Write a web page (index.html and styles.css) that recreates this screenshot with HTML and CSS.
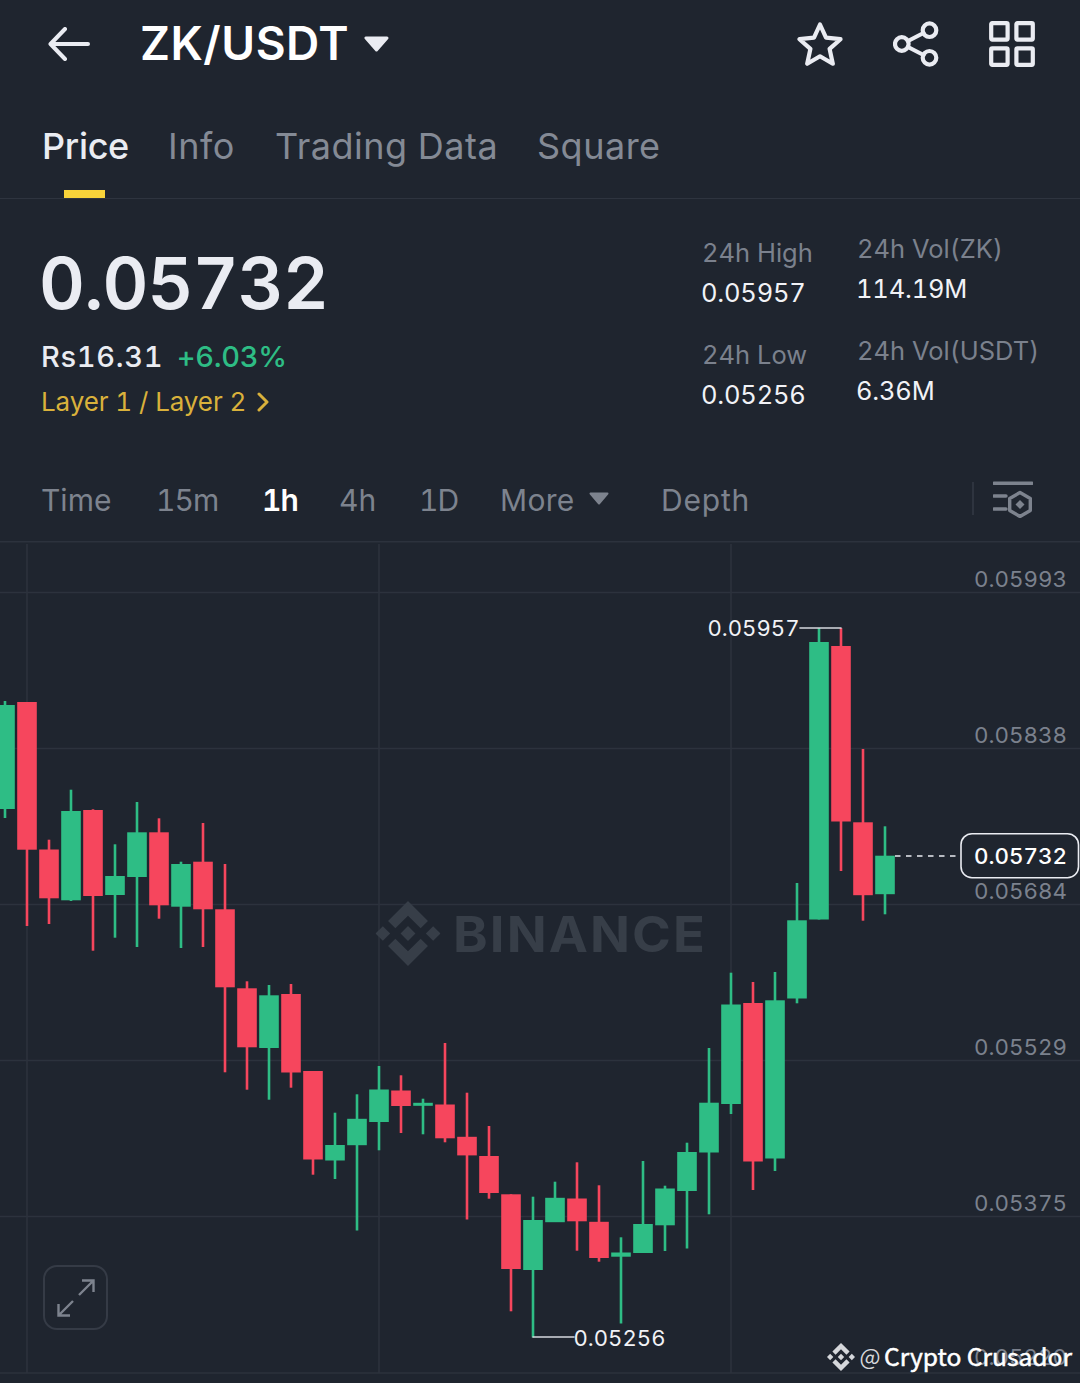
FILE: index.html
```html
<!DOCTYPE html>
<html lang="en">
<head>
<meta charset="UTF-8">
<meta name="viewport" content="width=device-width, initial-scale=1.0">
<title>ZK/USDT</title>
<link rel="stylesheet" href="styles.css">
</head>
<body>
<svg class="symbols" width="0" height="0">
    <symbol id="binance" viewBox="0 0 126.6 126.6">
        <path d="M38.7 53.2l24.6-24.6 24.6 24.6 14.3-14.3L63.3 0 24.4 38.9z"/>
        <path d="M0 63.3L14.3 49l14.3 14.3-14.3 14.3z"/>
        <path d="M38.7 73.4L63.3 98l24.6-24.6 14.3 14.3-38.9 38.9-38.9-38.9z"/>
        <path d="M98 63.3L112.3 49l14.3 14.3-14.3 14.3z"/>
        <path d="M77.8 63.3L63.3 48.8 48.8 63.3l14.5 14.5z"/>
    </symbol>
</svg>

<header class="header">
    <svg class="back" viewBox="0 0 42 34">
        <path d="M17 2L2.5 17 17 32M3 17h37"/>
    </svg>
    <h1 class="pair">ZK/USDT</h1>
    <svg class="pair_caret" viewBox="0 0 25 16">
        <path d="M2 2h21l-10.5 12z"/>
    </svg>
    <div class="header_icons">
        <svg viewBox="0 0 46 46">
            <path d="M23 3.5l6 13.2 14.5 1.5-10.9 9.7 3.2 14.8L23 35.3l-12.8 7.400 3.200-14.800L2.500 18.200 17 16.700z"/>
        </svg>
        <svg viewBox="0 0 46 46">
            <circle cx="8.800" cy="23" r="6.800"/>
            <circle cx="36.500" cy="9.200" r="6.800"/>
            <circle cx="36.500" cy="36.800" r="6.800"/>
            <path d="M15 20l15.500-8M15 26l15.500 8"/>
        </svg>
        <svg viewBox="0 0 46 46">
            <rect x="2.200" y="2.200" width="16.400" height="16.400" rx="1"/>
            <rect x="27.400" y="2.200" width="16.400" height="16.400" rx="1"/>
            <rect x="2.200" y="27.400" width="16.400" height="16.400" rx="1"/>
            <rect x="27.400" y="27.400" width="16.400" height="16.400" rx="1"/>
        </svg>
    </div>
</header>

<nav class="tabs">
    <span class="tab active">Price</span>
    <span class="tab">Info</span>
    <span class="tab">Trading Data</span>
    <span class="tab">Square</span>
</nav>

<section class="summary">
    <div class="quote">
        <div class="price">0.05732</div>
        <div class="fiat">Rs16.31 <span class="change">+6.03%</span></div>
        <div class="category">Layer 1 / Layer 2
            <svg viewBox="0 0 12 20"><path d="M2 2l8 8-8 8"/></svg>
        </div>
    </div>
    <div class="stats">
        <div class="label">24h High</div>
        <div class="value">0.05957</div>
        <div class="label">24h Low</div>
        <div class="value">0.05256</div>
    </div>
    <div class="stats volume">
        <div class="label">24h Vol(ZK)</div>
        <div class="value">114.19M</div>
        <div class="label">24h Vol(USDT)</div>
        <div class="value">6.36M</div>
    </div>
</section>

<div class="intervals">
    <span>Time</span>
    <span class="tight">15m</span>
    <span class="active tight">1h</span>
    <span>4h</span>
    <span class="tight">1D</span>
    <span class="more">More <svg viewBox="0 0 20 13"><path d="M1.500 1.500h17L10 11.500z"/></svg></span>
    <span class="depth">Depth</span>
    <div class="settings">
        <svg viewBox="0 0 40 38">
            <path d="M1 3.200h38M1 16h12M1 29h12M27 12.500l10.300 6v12L27 36.500l-10.300-6v-12z"/>
            <path class="dot" d="M27 20l4.500 4.500L27 29l-4.500-4.500z"/>
        </svg>
    </div>
</div>

<section class="chart">
    <svg viewBox="0 541 1080 842" width="1080" height="842">
        <g id="grid"></g>
        <g class="brand">
            <use href="#binance" x="375.500" y="901" width="65" height="65"/>
            <text x="453" y="951.500" textLength="254" lengthAdjust="spacingAndGlyphs">BINANCE</text>
        </g>
        <g id="axis"></g>
        <g id="candles"></g>
        <g class="marker">
            <path d="M800 628h41M533 1337h41"/>
            <text x="707.500" y="636" textLength="92" lengthAdjust="spacingAndGlyphs">0.05957</text>
            <text x="573.500" y="1346" textLength="92" lengthAdjust="spacingAndGlyphs">0.05256</text>
        </g>
        <g class="last">
            <path d="M895 856h61"/>
            <rect x="961" y="833.700" width="117.500" height="44" rx="11"/>
            <text x="974" y="864" textLength="93" lengthAdjust="spacingAndGlyphs">0.05732</text>
        </g>
        <g class="author">
            <use href="#binance" x="827" y="1343" width="28" height="28"/>
            <text class="at" x="859.500" y="1364.500" textLength="21" lengthAdjust="spacingAndGlyphs">@</text>
            <text x="884" y="1365.500" textLength="188" lengthAdjust="spacingAndGlyphs">Crypto Crusador</text>
        </g>
    </svg>
    <div class="expand">
        <svg viewBox="0 0 40 40">
            <path d="M23 17L37.500 2.500M26 2.500h11.500V14M17 23L2.500 37.500M2.500 26v11.500H14"/>
        </svg>
    </div>
</section>

<script>
// [up, high, bodyTop, bodyBottom, low] in chart pixels
const candles = [
  [1, 701, 705, 809, 818], [0, 702, 702, 849.7, 926], [0, 839.7, 849.5, 898.3, 924],
  [1, 789.7, 811, 900.3, 901], [0, 809.3, 810, 896, 950.7], [1, 844.3, 876, 895, 937.7],
  [1, 802, 832.3, 877, 947], [0, 818.3, 832.3, 905.3, 918.7], [1, 861.7, 864, 906.7, 948],
  [0, 823, 861.7, 909.3, 947], [0, 864, 909.3, 987.3, 1072.3], [0, 981.3, 988.3, 1047.3, 1089.7],
  [1, 985, 995.3, 1048, 1099.7], [0, 984, 994, 1072.5, 1087.7], [0, 1071, 1071, 1159.5, 1174.7],
  [1, 1112.7, 1145, 1160.5, 1179], [1, 1094.3, 1118.8, 1145.2, 1230.5], [1, 1066, 1089.5, 1122, 1150.3],
  [0, 1075.3, 1090.5, 1106, 1133], [1, 1098.7, 1102.8, 1105.8, 1134.3], [0, 1043, 1104.5, 1138.3, 1142.3],
  [0, 1092.7, 1136.8, 1155.4, 1219.5], [0, 1126, 1156, 1193, 1198.7], [0, 1194.3, 1194.3, 1269, 1311.3],
  [1, 1196.7, 1220, 1270, 1337.5], [1, 1181.7, 1197.8, 1222.2, 1222], [0, 1162.3, 1198.5, 1221.3, 1250.7],
  [0, 1185.3, 1221.8, 1258, 1261.7], [1, 1237.3, 1252.5, 1256.7, 1323.5], [1, 1161, 1224, 1253, 1253],
  [1, 1185.7, 1188.5, 1225.3, 1251], [1, 1142.7, 1152, 1191, 1248.5], [1, 1048, 1102.7, 1152.5, 1214.3],
  [1, 972.7, 1004.5, 1104, 1114], [0, 982, 1003, 1161.5, 1190], [1, 972, 1000.3, 1158.5, 1171],
  [1, 883, 920.3, 998.5, 1003.3], [1, 628, 642, 919.5, 919.5], [0, 628, 646, 821.5, 871],
  [0, 749, 822.3, 895.2, 920.7], [1, 826.3, 855.7, 894.2, 914.3]
];
const levels = [
  [592.5, "0.05993"], [748.5, "0.05838"], [904.5, "0.05684"],
  [1060.5, "0.05529"], [1216.5, "0.05375"], [1373, "0.05220"]
];

let grid = '<path d="M0 541.8H1080"/>';
let axis = "";
levels.forEach(([y, price]) => {
  grid += `<path d="M0 ${y}H1080"/>`;
  const base = price === "0.05220" ? 1365 : y - 5.5;
  axis += `<text x="974" y="${base}" textLength="93" lengthAdjust="spacingAndGlyphs">${price}</text>`;
});
[27, 379, 731].forEach((x) => {
  grid += `<path d="M${x} 544V1373"/>`;
});

let bars = "";
candles.forEach(([up, high, top, bottom, low], i) => {
  const x = 5 + i * 22;
  bars += `<g class="${up ? "up" : "down"}">
    <rect x="${x - 1.3}" y="${high}" width="2.6" height="${Math.max(low - high, 0)}"/>
    <rect x="${x - 9.8}" y="${top}" width="19.6" height="${bottom - top}"/>
  </g>`;
});

document.getElementById("grid").innerHTML = grid;
document.getElementById("axis").innerHTML = axis;
document.getElementById("candles").innerHTML = bars;
</script>
</body>
</html>
```

FILE: styles.css
```css
* {
    margin: 0;
    padding: 0;
    box-sizing: border-box;
}

body {
    width: 1080px;
    height: 1383px;
    overflow: hidden;
    background: #1f252f;
    color: #eaecf2;
    font-family: Inter, "Liberation Sans", sans-serif;
    font-variant-numeric: tabular-nums;
}

svg {
    display: block;
    fill: none;
    stroke-linecap: round;
    stroke-linejoin: round;
}

.symbols {
    position: absolute;
}

.header {
    display: flex;
    align-items: center;
    height: 87px;
    padding: 0 45px 0 48px;
}

.back {
    width: 42px;
    height: 34px;
    stroke: #eaecf2;
    stroke-width: 4;
}

.pair {
    width: 208px;
    margin-left: 50px;
    padding-bottom: 2px;
    font-size: 46px;
    font-weight: 600;
    line-height: 84px;
    letter-spacing: 0.5px;
    color: #ffffff;
    white-space: nowrap;
}

.pair_caret {
    width: 25px;
    height: 16px;
    margin-left: 16px;
    fill: #eaecf2;
    stroke: #eaecf2;
    stroke-width: 3;
}

.header_icons {
    display: flex;
    gap: 50px;
    margin-left: auto;
}

.header_icons svg {
    width: 46px;
    height: 46px;
    stroke: #eaecf2;
    stroke-width: 4.2;
}

.tabs {
    display: grid;
    grid-template-columns: 126px 107px 262px auto;
    height: 112px;
    padding-left: 42px;
    border-bottom: 1px solid #2e343f;
    font-size: 36px;
    line-height: 119px;
    letter-spacing: 0.5px;
    color: #848a95;
}

.tab.active {
    color: #eaecf2;
    font-weight: 500;
    letter-spacing: -0.3px;
}

.tab.active::after {
    content: "";
    display: block;
    width: 41px;
    height: 8px;
    margin: -16px 0 0 22px;
    background: #f8d33a;
}

.summary {
    display: flex;
    height: 263px;
    padding-left: 41px;
}

.quote {
    width: 661px;
    padding-top: 40px;
}

.price {
    margin-left: -2px;
    font-size: 71px;
    font-weight: 600;
    line-height: 88px;
    letter-spacing: -0.8px;
}

.fiat {
    margin-top: 10px;
    font-size: 29px;
    font-weight: 500;
    line-height: 40px;
    letter-spacing: 0.7px;
}

.change {
    margin-left: 5px;
    color: #2ebd85;
    letter-spacing: -0.3px;
}

.category {
    display: flex;
    align-items: center;
    margin-top: 5px;
    font-size: 26px;
    line-height: 40px;
    letter-spacing: -0.1px;
    color: #d9b13b;
}

.category svg {
    width: 12px;
    height: 20px;
    margin-left: 11px;
    stroke: #d9b13b;
    stroke-width: 3;
}

.stats {
    width: 155px;
    padding-top: 34px;
    font-size: 25.5px;
    line-height: 40px;
    white-space: nowrap;
}

.stats.volume {
    width: auto;
    padding-top: 30px;
}

.stats .label {
    color: #7b818d;
}

.stats .value {
    margin: 0 0 22px -1px;
    color: #f1f2f6;
    letter-spacing: -0.2px;
}

.intervals {
    display: grid;
    grid-template-columns: 115px 106px 77px 80px 81px 160px 311px 60px;
    height: 79px;
    padding-left: 41px;
    font-size: 30px;
    line-height: 77px;
    color: #7d838e;
}

.intervals .active {
    color: #ffffff;
    font-weight: 600;
}

.intervals .tight {
    letter-spacing: -1px;
}

.intervals .depth {
    padding-left: 1px;
    letter-spacing: 0.8px;
}

.more {
    display: flex;
    height: 77px;
    letter-spacing: 0.3px;
}

.more svg {
    width: 20px;
    height: 13px;
    margin: 30px 0 0 14px;
    fill: #7d838e;
    stroke: #7d838e;
    stroke-width: 2;
}

.settings {
    height: 33px;
    margin: 20px 0 0 1px;
    border-left: 2px solid #2e343f;
}

.settings svg {
    width: 40px;
    height: 38px;
    margin: 0 0 0 19px;
    transform: translateY(-2px);
    stroke: #7d838e;
    stroke-width: 3.4;
}

.settings .dot {
    fill: #7d838e;
    stroke: none;
}

.chart {
    position: relative;
    height: 842px;
}

.chart text {
    font-size: 21.5px;
}

#grid path {
    stroke: #2c323d;
    stroke-width: 1.6;
    stroke-linecap: butt;
}

#axis text {
    fill: #7b818d;
}

.brand {
    fill: #373e48;
}

.chart .brand text {
    font-size: 50px;
    font-weight: 700;
    letter-spacing: 2px;
}

.up {
    fill: #2ebd85;
}

.down {
    fill: #f6465d;
}

.marker path {
    stroke: #d5d8de;
    stroke-width: 1.6;
}

.marker text {
    fill: #f1f2f6;
}

.last path {
    stroke: #eaecf2;
    stroke-width: 1.6;
    stroke-dasharray: 5.5 5.5;
    stroke-linecap: butt;
}

.last rect {
    fill: #1f252f;
    stroke: #eaecf2;
    stroke-width: 1.6;
}

.last text {
    fill: #ffffff;
    font-weight: 500;
}

.author {
    fill: #d5d7db;
}

.chart .author text {
    fill: #ffffff;
    stroke: #ffffff;
    stroke-width: 0.5;
    font-family: "Noto Sans CJK SC", sans-serif;
    font-size: 24px;
}

.chart .author .at {
    fill: #d5d7db;
    stroke: none;
    font-size: 22px;
}

.expand {
    position: absolute;
    left: 43px;
    top: 724px;
    display: flex;
    align-items: center;
    justify-content: center;
    width: 65px;
    height: 65px;
    border: 2px solid #353b46;
    border-radius: 14px;
}

.expand svg {
    width: 40px;
    height: 40px;
    stroke: #7d838e;
    stroke-width: 2.4;
    stroke-linecap: butt;
    stroke-linejoin: miter;
}
```
